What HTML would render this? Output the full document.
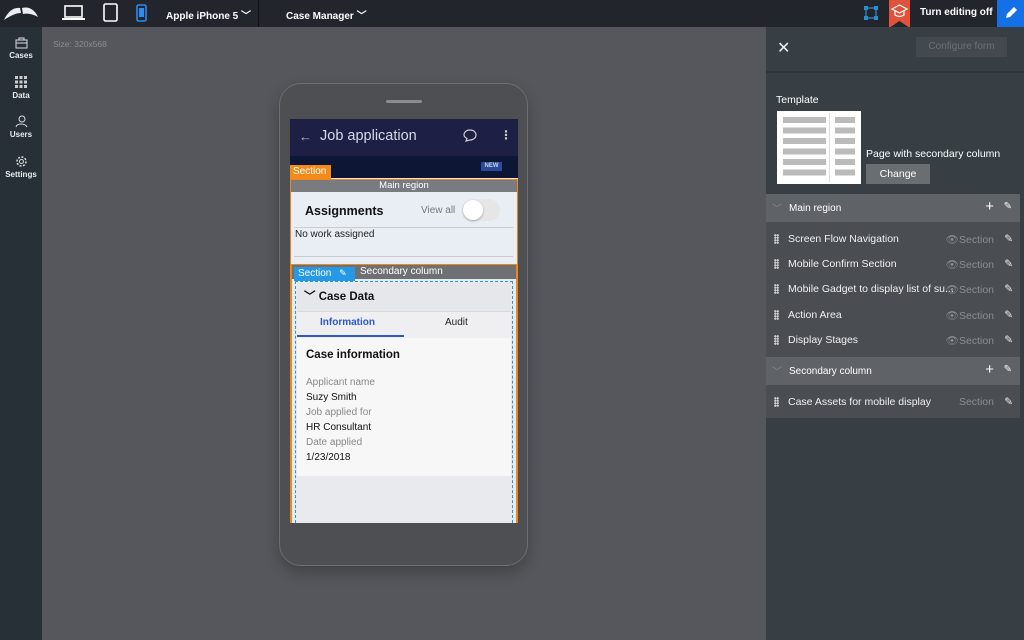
<!DOCTYPE html>
<html><head><meta charset="utf-8"><style>
*{margin:0;padding:0;box-sizing:border-box}
body{width:1024px;height:640px;overflow:hidden;font-family:"Liberation Sans","DejaVu Sans",sans-serif;background:#55575c;position:relative}
.a{position:absolute}
.top{left:0;top:0;width:1024px;height:27px;background:#22252c}
.side{left:0;top:27px;width:42px;height:613px;background:#263036}
.side div{position:absolute;width:42px;text-align:center;color:#e8ecef;font-size:8px;font-weight:bold}
.t{color:#fff;font-size:10px;font-weight:bold}
.rp{left:766px;top:27px;width:258px;height:613px;background:#373f44}
.row{position:absolute;left:766px;width:254px;height:25px;color:#f0f0f0;font-size:10.5px}
.row .n{position:absolute;left:22px;top:6px}
.row .d{position:absolute;left:8px;top:7px;width:5px;height:10px;background:radial-gradient(circle,#ccc 1px,transparent 1.2px) 0 0/2.5px 2.5px}
.row .s{position:absolute;right:26px;top:6px;color:#8a8e92}
.row .p{position:absolute;right:7px;top:6px}
.hdr{position:absolute;left:766px;width:254px;height:28px;background:#5f6266;color:#fff;font-size:10px}
</style></head><body>
<div class="a top"></div>
<svg class="a" style="left:2px;top:3px" width="38" height="20"><path d="M2 17 C6 8 12 4 18 5 L19 10 C14 10 8 13 2 17Z M20 5 C27 3 33 7 36 14 C31 11 25 10 21 11Z" fill="#e9eef0"/></svg>
<svg class="a" style="left:62px;top:5px" width="24" height="16"><rect x="3" y="1" width="17" height="11" fill="none" stroke="#fff" stroke-width="1.6"/><rect x="0" y="13" width="23" height="2" fill="#fff"/></svg>
<svg class="a" style="left:103px;top:3px" width="16" height="20"><rect x="1" y="1" width="13" height="17" rx="1.5" fill="none" stroke="#fff" stroke-width="1.6"/></svg>
<svg class="a" style="left:136px;top:4px" width="12" height="18"><rect x="1" y="1" width="9" height="16" rx="1.5" fill="none" stroke="#2a8cf0" stroke-width="1.6"/><rect x="3" y="4" width="5" height="9" fill="#2a8cf0"/></svg>
<div class="a t" style="left:166px;top:7px">Apple iPhone 5 ﹀</div>
<div class="a" style="left:258px;top:0;width:1px;height:27px;background:#111"></div>
<div class="a t" style="left:286px;top:7px">Case Manager ﹀</div>
<svg class="a" style="left:864px;top:6px" width="14" height="14"><rect x="2" y="2" width="10" height="10" fill="none" stroke="#2b8fcf" stroke-width="1.2"/><rect x="0" y="0" width="4" height="4" fill="#2b8fcf"/><rect x="10" y="0" width="4" height="4" fill="#2b8fcf"/><rect x="0" y="10" width="4" height="4" fill="#2b8fcf"/><rect x="10" y="10" width="4" height="4" fill="#2b8fcf"/></svg>
<svg class="a" style="left:889px;top:0" width="21" height="28"><path d="M0 0H21V28L10.5 21L0 28Z" fill="#e0533a"/><path d="M3 9 L10.5 5 L18 9 L10.5 13Z M6 11 V15 C9 17 12 17 15 15 V11" fill="none" stroke="#fff" stroke-width="1.2"/></svg>
<div class="a t" style="left:920px;top:7px">Turn editing off</div>
<div class="a" style="left:997px;top:0;width:27px;height:27px;background:#1470e6"></div>
<svg class="a" style="left:1004px;top:6px" width="14" height="14"><path d="M2 12 L3 8 L10 1 L13 4 L6 11Z" fill="#fff"/></svg>

<div class="a side">
<svg class="a" style="left:15px;top:10px" width="13" height="12"><rect x="1" y="3" width="11" height="8" fill="none" stroke="#ddd"/><path d="M4 3V1H9V3M1 6H12" fill="none" stroke="#ddd"/></svg>
<div style="top:24px">Cases</div>
<svg class="a" style="left:15px;top:49px" width="12" height="12"><g fill="#ccc"><rect x="0" y="0" width="3" height="3"/><rect x="4.5" y="0" width="3" height="3"/><rect x="9" y="0" width="3" height="3"/><rect x="0" y="4.5" width="3" height="3"/><rect x="4.5" y="4.5" width="3" height="3"/><rect x="9" y="4.5" width="3" height="3"/><rect x="0" y="9" width="3" height="3"/><rect x="4.5" y="9" width="3" height="3"/><rect x="9" y="9" width="3" height="3"/></g></svg>
<div style="top:64px">Data</div>
<svg class="a" style="left:15px;top:88px" width="13" height="13"><circle cx="7" cy="4" r="3" fill="none" stroke="#ddd"/><path d="M1 12 C2 8 10 8 12 12" fill="none" stroke="#ddd"/></svg>
<div style="top:103px">Users</div>
<svg class="a" style="left:15px;top:128px" width="13" height="13"><circle cx="6.5" cy="6.5" r="4.5" fill="none" stroke="#ddd" stroke-width="1.5" stroke-dasharray="2 1.5"/><circle cx="6.5" cy="6.5" r="2" fill="none" stroke="#ddd"/></svg>
<div style="top:143px">Settings</div>
</div>
<div class="a" style="left:53px;top:39px;color:#8a8c90;font-size:8.5px">Size: 320x568</div>

<!-- phone -->
<div class="a" style="left:279px;top:83px;width:249px;height:483px;border-radius:22px;background:#4d4f53;border:1px solid #6c6e72;box-shadow:0 6px 14px rgba(0,0,0,.25)"></div>
<div class="a" style="left:386px;top:100px;width:36px;height:3px;border-radius:2px;background:#8a8c90"></div>
<div class="a" style="left:290px;top:119px;width:228px;height:404px;background:#e9eaee"></div>
<div class="a" style="left:290px;top:119px;width:228px;height:37px;background:#1d1f45"></div>
<div class="a" style="left:299px;top:129px;color:#bbb;font-size:13px">←</div>
<div class="a" style="left:320px;top:128px;color:#d8dae8;font-size:14.5px">Job application</div>
<svg class="a" style="left:463px;top:129px" width="14" height="13"><path d="M7 1 C11 1 13 3.5 13 6 C13 9 10 11 7 11 L3 12 L4 9.5 C2 8.5 1 7 1 6 C1 3.5 3 1 7 1Z" fill="none" stroke="#ccc" stroke-width="1.2"/></svg>
<div class="a" style="left:500px;top:128px;color:#ccc;font-size:12px;font-weight:bold">⋮</div>
<div class="a" style="left:290px;top:156px;width:228px;height:22px;background:#0e1636"></div>
<div class="a" style="left:481px;top:162px;width:21px;height:9px;background:#2a4a9a;color:#c9d3f0;font-size:6px;font-weight:bold;text-align:center;line-height:9px">NEW</div>
<div class="a" style="left:290px;top:165px;width:41px;height:14px;background:#f38a1a;color:#fff;font-size:10px;padding:1px 3px">Section</div>
<div class="a" style="left:290px;top:179px;width:228px;height:86px;border:1px solid #f0861a;background:#e8eef4"></div>
<div class="a" style="left:291px;top:180px;width:226px;height:12px;background:#7a7b7e;color:#fff;font-size:9.5px;text-align:center;line-height:12px">Main region</div>
<div class="a" style="left:305px;top:204px;color:#111;font-size:12.5px;font-weight:bold">Assignments</div>
<div class="a" style="left:421px;top:205px;color:#777;font-size:10px">View all</div>
<div class="a" style="left:462px;top:199px;width:38px;height:22px;border-radius:11px;background:#e6e6e6"></div>
<div class="a" style="left:463px;top:200px;width:20px;height:20px;border-radius:10px;background:#fff;box-shadow:0 1px 2px rgba(0,0,0,.3)"></div>
<div class="a" style="left:294px;top:227px;width:219px;height:1px;background:#ccc"></div>
<div class="a" style="left:295px;top:229px;color:#222;font-size:10px">No work assigned</div>
<div class="a" style="left:294px;top:256px;width:219px;height:1px;background:#ccc"></div>
<div class="a" style="left:291px;top:265px;width:226px;height:14px;background:#6e7073;color:#fff;font-size:10px;padding-left:69px;line-height:13px">Secondary column</div>
<div class="a" style="left:290px;top:265px;width:228px;height:258px;border-left:2px solid #f0861a;border-right:2px solid #f0861a"></div>
<div class="a" style="left:294px;top:267px;width:61px;height:14px;background:#2699e6;color:#fff;font-size:10px;padding:1px 4px">Section <span style="font-size:9px;margin-left:5px">✎</span></div>
<div class="a" style="left:295px;top:281px;width:218px;height:242px;border:1.3px dashed #1e9ae0;border-bottom:none"></div>
<div class="a" style="left:297px;top:283px;width:214px;height:28px;background:#e6e7ea"></div>
<div class="a" style="left:304px;top:288px;color:#111;font-size:11.5px;font-weight:bold">﹀ Case Data</div>
<div class="a" style="left:297px;top:311px;width:214px;height:27px;background:#efeff1;border-top:1px solid #d8d8d8"></div>
<div class="a" style="left:320px;top:317px;color:#2a59c9;font-size:10px;font-weight:bold">Information</div>
<div class="a" style="left:445px;top:317px;color:#222;font-size:10px">Audit</div>
<div class="a" style="left:297px;top:335px;width:107px;height:2px;background:#2a59c9"></div>
<div class="a" style="left:297px;top:338px;width:214px;height:138px;background:#f7f7f8"></div>
<div class="a" style="left:306px;top:349px;color:#111;font-size:11.5px;font-weight:bold">Case information</div>
<div class="a" style="left:306px;top:375px;color:#888;font-size:10px;line-height:15px">Applicant name<br><span style="color:#111">Suzy Smith</span><br>Job applied for<br><span style="color:#111">HR Consultant</span><br>Date applied<br><span style="color:#111">1/23/2018</span></div>

<!-- right panel -->
<div class="a rp"></div>
<div class="a" style="left:766px;top:71px;width:258px;height:2px;background:#2d3337"></div>
<div class="a" style="left:777px;top:38px;color:#eee;font-size:16px">✕</div>
<div class="a" style="left:916px;top:37px;width:91px;height:20px;background:#43494e;color:#6a7075;font-size:10px;text-align:center;line-height:20px">Configure form</div>
<div class="a" style="left:776px;top:94px;color:#fff;font-size:10.5px">Template</div>
<div class="a" style="left:777px;top:111px;width:84px;height:73px;background:#fff"></div>
<div class="a" style="left:783px;top:117px;width:43px;height:62px;background:repeating-linear-gradient(#bbb 0 6px,#fff 6px 10.5px)"></div>
<div class="a" style="left:829px;top:113px;width:1px;height:69px;background:#ddd"></div>
<div class="a" style="left:835px;top:117px;width:20px;height:62px;background:repeating-linear-gradient(#bbb 0 6px,#fff 6px 10.5px)"></div>
<div class="a" style="left:866px;top:148px;color:#fff;font-size:10.5px">Page with secondary column</div>
<div class="a" style="left:866px;top:164px;width:64px;height:20px;background:#6b6e71;color:#fff;font-size:10.5px;text-align:center;line-height:20px">Change</div>

<div class="a" style="left:766px;top:222px;width:254px;height:135px;background:#4a4e53"></div>
<div class="a" style="left:766px;top:385px;width:254px;height:33px;background:#4a4e53"></div>
<div class="hdr" style="top:194px"><span class="a" style="left:6px;top:6px;color:#888">﹀</span><span class="a" style="left:23px;top:9px">Main region</span><span class="a" style="right:26px;top:4px;font-size:15px">+</span><span class="a" style="right:8px;top:7px">✎</span></div>
<div class="row" style="top:227px"><i class="d"></i><span class="n">Screen Flow Navigation</span><span class="s">👁︎Section</span><span class="p">✎</span></div>
<div class="row" style="top:252px"><i class="d"></i><span class="n">Mobile Confirm Section</span><span class="s">👁︎Section</span><span class="p">✎</span></div>
<div class="row" style="top:277px"><i class="d"></i><span class="n">Mobile Gadget to display list of su...</span><span class="s">👁︎Section</span><span class="p">✎</span></div>
<div class="row" style="top:303px"><i class="d"></i><span class="n">Action Area</span><span class="s">👁︎Section</span><span class="p">✎</span></div>
<div class="row" style="top:328px"><i class="d"></i><span class="n">Display Stages</span><span class="s">👁︎Section</span><span class="p">✎</span></div>
<div class="hdr" style="top:357px"><span class="a" style="left:6px;top:6px;color:#888">﹀</span><span class="a" style="left:23px;top:9px">Secondary column</span><span class="a" style="right:26px;top:4px;font-size:15px">+</span><span class="a" style="right:8px;top:7px">✎</span></div>
<div class="row" style="top:390px"><i class="d"></i><span class="n">Case Assets for mobile display</span><span class="s">Section</span><span class="p">✎</span></div>
</body></html>
